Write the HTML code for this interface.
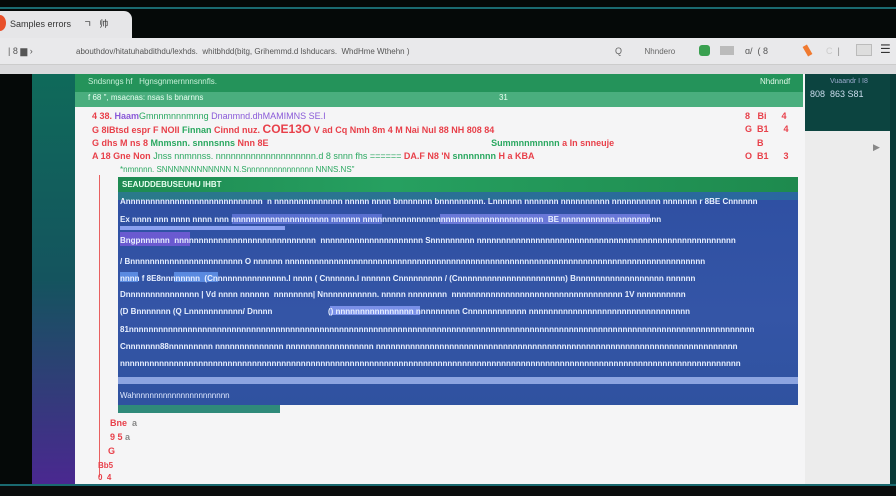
<!DOCTYPE html>
<html><head><meta charset="utf-8"><style>
*{margin:0;padding:0;box-sizing:border-box}
body{width:896px;height:496px;overflow:hidden;background:#050908;font-family:"Liberation Sans",sans-serif;position:relative}
.a{position:absolute}
.t{position:absolute;white-space:nowrap;font-size:9px;line-height:11px}
.r{color:#e8404a;font-weight:bold}
.g{color:#2aa860}
.p{color:#8a5ad8}
.w{color:#e8f0ff;font-size:8px;font-weight:bold}
</style></head><body>
<div class="a" style="left:0;top:7px;width:896px;height:2px;background:#1a6a70"></div>
<div class="a" style="left:0;top:11px;width:132px;height:28px;background:#e6e6e8;border-radius:0 8px 0 0"></div>
<div class="a" style="left:-6px;top:15px;width:12px;height:16px;border-radius:50%;background:#e8502a"></div>
<div class="t" style="left:10px;top:19px;color:#333">Samples errors &nbsp;&nbsp;&nbsp;&nbsp;ㄱ &nbsp;&nbsp;帅</div>
<div class="a" style="left:0;top:38px;width:896px;height:27px;background:#e9e9eb;border-bottom:1px solid #ccc"></div>
<div class="t" style="left:8px;top:46px;color:#555">| 8 ▆ › </div>
<div class="t" style="left:76px;top:46px;color:#555;font-size:8px">abouthdov/hitatuhabdithdu/lexhds.&nbsp; whitbhdd(bitg, Grihemmd.d lshducars.&nbsp; WhdHme Wthehn )</div>
<div class="t" style="left:615px;top:46px;color:#666">Q &nbsp;&nbsp;&nbsp;&nbsp;&nbsp;&nbsp;&nbsp;&nbsp;<span style="font-size:8px">Nhndero</span></div>
<div class="a" style="left:699px;top:45px;width:11px;height:11px;border-radius:3px;background:#3aa050"></div>
<div class="a" style="left:720px;top:46px;width:14px;height:9px;background:#bbb"></div>
<div class="t" style="left:745px;top:46px;color:#555">ɑ/ &nbsp;( 8</div>
<div class="a" style="left:805px;top:45px;width:5px;height:11px;background:#f07a30;transform:rotate(-30deg)"></div>
<div class="t" style="left:826px;top:46px;color:#ccc">C &nbsp;<span style="color:#888">|</span></div>
<div class="a" style="left:856px;top:44px;width:16px;height:12px;border:1px solid #bbb;background:#ddd"></div>
<div class="t" style="left:880px;top:44px;color:#333;font-size:12px">☰</div>
<div class="a" style="left:0;top:65px;width:896px;height:9px;background:#dadadc"></div>
<div class="a" style="left:32px;top:74px;width:44px;height:410px;background:linear-gradient(#0f6a5a,#14545e 50%,#4a2890)"></div>
<div class="a" style="left:75px;top:74px;width:730px;height:410px;background:#f5f5f6"></div>
<div class="a" style="left:75px;top:74px;width:728px;height:19px;background:#24935a"></div>
<div class="a" style="left:75px;top:92px;width:728px;height:15px;background:#4aae7e"></div>
<div class="t" style="left:88px;top:76px;color:#c8f0d8;font-size:8px">Sndsnngs hf &nbsp;&nbsp;Hgnsgnmernnnsnnfls.</div>
<div class="t" style="left:760px;top:76px;color:#e0f8e8;font-size:8px">Nhdnndf</div>
<div class="t" style="left:88px;top:92px;color:#e8fff0;font-size:8px">f 68 ", msacnas: nsas ls bnarnns &nbsp;&nbsp;&nbsp;&nbsp;&nbsp;&nbsp;&nbsp;&nbsp;&nbsp;&nbsp;&nbsp;&nbsp;&nbsp;&nbsp;&nbsp;&nbsp;&nbsp;&nbsp;&nbsp;&nbsp;&nbsp;&nbsp;&nbsp;&nbsp;&nbsp;&nbsp;&nbsp;&nbsp;&nbsp;&nbsp;&nbsp;&nbsp;&nbsp;&nbsp;&nbsp;&nbsp;&nbsp;&nbsp;&nbsp;&nbsp;&nbsp;&nbsp;&nbsp;&nbsp;&nbsp;&nbsp;&nbsp;&nbsp;&nbsp;&nbsp;&nbsp;&nbsp;&nbsp;&nbsp;&nbsp;&nbsp;&nbsp;&nbsp;&nbsp;&nbsp;&nbsp;&nbsp;&nbsp;&nbsp;&nbsp;&nbsp;&nbsp;&nbsp;&nbsp;&nbsp;&nbsp;&nbsp;&nbsp;&nbsp;&nbsp;&nbsp;&nbsp;&nbsp;&nbsp;&nbsp;&nbsp;&nbsp;&nbsp;&nbsp;&nbsp;&nbsp;&nbsp;&nbsp;&nbsp;&nbsp;&nbsp;&nbsp;&nbsp;&nbsp;&nbsp;&nbsp;&nbsp;&nbsp;&nbsp;&nbsp;&nbsp;&nbsp;&nbsp;&nbsp;&nbsp;&nbsp;&nbsp;&nbsp;&nbsp;&nbsp;&nbsp;&nbsp;&nbsp;&nbsp;&nbsp;&nbsp;&nbsp;&nbsp;&nbsp;&nbsp;&nbsp;&nbsp;&nbsp;&nbsp;&nbsp;&nbsp;&nbsp;&nbsp;&nbsp;&nbsp;&nbsp; 31</div>
<div class="a" style="left:805px;top:74px;width:85px;height:57px;background:#0c4440"></div>
<div class="a" style="left:805px;top:131px;width:85px;height:353px;background:#ececec"></div>
<div class="a" style="left:890px;top:74px;width:6px;height:410px;background:#0a3a38"></div>
<div class="t" style="left:830px;top:76px;color:#9ac;font-size:7px">Vuaandr I I8</div>
<div class="t" style="left:810px;top:89px;color:#cde;font-size:9px">808 &nbsp;863 S81</div>
<div class="t" style="left:873px;top:142px;color:#888">▶</div>
<div class="t r" style="left:92px;top:111px">4 38. <span class="p">Haam</span><span class="g" style="font-weight:normal">Gmnnmnnnmnng</span> <span class="p" style="font-weight:normal">Dnanmnd.dhMAMIMNS SE.I</span></div>
<div class="t r" style="left:92px;top:124px">G 8IBtsd espr F NOII <span class="g">Finnan</span> Cinnd nuz. <span style="font-size:12px">COE13O</span> V ad Cq Nmh 8m 4 M Nai NuI 88 NH 808 84</div>
<div class="t r" style="left:92px;top:138px">G dhs M ns 8 <span class="g">Mnmsnn. snnnsnns</span> Nnn 8E &nbsp;&nbsp;&nbsp;&nbsp;&nbsp;&nbsp;&nbsp;&nbsp;&nbsp;&nbsp;&nbsp;&nbsp;&nbsp;&nbsp;&nbsp;&nbsp;&nbsp;&nbsp;&nbsp;&nbsp;&nbsp;&nbsp;&nbsp;&nbsp;&nbsp;&nbsp;&nbsp;&nbsp;&nbsp;&nbsp;&nbsp;&nbsp;&nbsp;&nbsp;&nbsp;&nbsp;&nbsp;&nbsp;&nbsp;&nbsp;&nbsp;&nbsp;&nbsp;&nbsp;&nbsp;&nbsp;&nbsp;&nbsp;&nbsp;&nbsp;&nbsp;&nbsp;&nbsp;&nbsp;&nbsp;&nbsp;&nbsp;&nbsp;&nbsp;&nbsp;&nbsp;&nbsp;&nbsp;&nbsp;&nbsp;&nbsp;&nbsp;&nbsp;&nbsp;&nbsp;&nbsp;&nbsp;&nbsp;&nbsp;&nbsp;&nbsp;&nbsp;&nbsp;&nbsp;&nbsp;&nbsp;&nbsp;&nbsp;&nbsp;&nbsp;&nbsp;&nbsp;&nbsp;<span class="g">Summnnmnnnn</span> a In snneuje</div>
<div class="t r" style="left:92px;top:151px">A 18 Gne Non <span class="g" style="font-weight:normal">Jnss nnmnnss. nnnnnnnnnnnnnnnnnnnn.d 8 snnn fhs ======</span> DA.F N8 'N <span class="g">snnnnnnn</span> H a KBA</div>
<div class="t g" style="left:120px;top:164px;font-size:8px">*nmnnnn. SNNNNNNNNNNNN N.Snnnnnnnnnnnnnnn NNNS.NS"</div>
<div class="t r" style="left:745px;top:111px">8 &nbsp;&nbsp;Bi &nbsp;&nbsp;&nbsp;&nbsp;&nbsp;4</div>
<div class="t r" style="left:745px;top:124px">G &nbsp;B1 &nbsp;&nbsp;&nbsp;&nbsp;&nbsp;4</div>
<div class="t r" style="left:757px;top:138px">B</div>
<div class="t r" style="left:745px;top:151px">O &nbsp;B1 &nbsp;&nbsp;&nbsp;&nbsp;&nbsp;3</div>
<div class="a" style="left:99px;top:175px;width:1px;height:302px;background:#e86060"></div>
<div class="a" style="left:118px;top:177px;width:680px;height:228px;background:linear-gradient(#2e4fa2,#3455a6 60%,#2f52a0)"></div>
<div class="a" style="left:118px;top:177px;width:680px;height:18px;background:linear-gradient(90deg,#1e8a52,#26a060 40%,#1e8a4e)"></div>
<div class="a" style="left:118px;top:192px;width:680px;height:8px;background:linear-gradient(90deg,#2a7a8a,#2a66a0)"></div>
<div class="t" style="left:122px;top:179px;color:#e8fff0;font-size:8px;font-weight:bold">SEAUDDEBUSEUHU IHBT</div>
<div class="t w" style="left:120px;top:196px">Annnnnnnnnnnnnnnnnnnnnnnnnnnn &nbsp;n nnnnnnnnnnnnnn nnnnn nnnn bnnnnnnn bnnnnnnnnn. Lnnnnnn nnnnnnn nnnnnnnnnn nnnnnnnnnn nnnnnnn r 8BE Cnnnnnn</div>
<div class="a" style="left:232px;top:214px;width:150px;height:10px;background:#5a70d0"></div>
<div class="a" style="left:440px;top:214px;width:210px;height:10px;background:#6a78d8"></div>
<div class="t w" style="left:120px;top:214px">Ex nnnn nnn nnnn nnnn nnn nnnnnnnnnnnnnnnnnnnn nnnnnn nnnnnnnnnnnnnnnnnnnnnnnnnnnnnnnnnnnnn &nbsp;BE nnnnnnnnnnn.nnnnnnnnn</div>
<div class="a" style="left:120px;top:226px;width:165px;height:4px;background:#8aa0f0"></div>
<div class="a" style="left:120px;top:232px;width:70px;height:14px;background:#6a5ad0"></div>
<div class="t w" style="left:120px;top:235px">Bngpnnnnnn &nbsp;nnnnnnnnnnnnnnnnnnnnnnnnnnnnn &nbsp;nnnnnnnnnnnnnnnnnnnnn Snnnnnnnnn nnnnnnnnnnnnnnnnnnnnnnnnnnnnnnnnnnnnnnnnnnnnnnnnnnnnn</div>
<div class="t w" style="left:120px;top:256px">/ Bnnnnnnnnnnnnnnnnnnnnnnn O nnnnnn nnnnnnnnnnnnnnnnnnnnnnnnnnnnnnnnnnnnnnnnnnnnnnnnnnnnnnnnnnnnnnnnnnnnnnnnnnnnnnnnnnnnnn</div>
<div class="a" style="left:120px;top:272px;width:18px;height:10px;background:#5a8ae0"></div>
<div class="a" style="left:174px;top:272px;width:44px;height:10px;background:#5a8ae0"></div>
<div class="t w" style="left:120px;top:273px">nnnn f 8E8nnnnnnnn &nbsp;(Cnnnnnnnnnnnnnnn.l nnnn ( Cnnnnnn.l nnnnnn Cnnnnnnnnn / (Cnnnnnnnnnnnnnnnnnnnnnn) Bnnnnnnnnnnnnnnnnnn nnnnnn</div>
<div class="t w" style="left:120px;top:289px">Dnnnnnnnnnnnnnnn | Vd nnnn nnnnnn &nbsp;nnnnnnnn| Nnnnnnnnnnnn. nnnnn nnnnnnnn &nbsp;nnnnnnnnnnnnnnnnnnnnnnnnnnnnnnnnnnn 1V nnnnnnnnnn</div>
<div class="a" style="left:330px;top:306px;width:90px;height:9px;background:#7a90e8"></div>
<div class="t w" style="left:120px;top:306px">(D Bnnnnnnn (Q Lnnnnnnnnnnn/ Dnnnn &nbsp;&nbsp;&nbsp;&nbsp;&nbsp;&nbsp;&nbsp;&nbsp;&nbsp;&nbsp;&nbsp;&nbsp;&nbsp;&nbsp;&nbsp;&nbsp;&nbsp;&nbsp;&nbsp;&nbsp;&nbsp;&nbsp;&nbsp; () nnnnnnnnnnnnnnnn nnnnnnnnn Cnnnnnnnnnnnn nnnnnnnnnnnnnnnnnnnnnnnnnnnnnnnnn</div>
<div class="t w" style="left:120px;top:324px">81nnnnnnnnnnnnnnnnnnnnnnnnnnnnnnnnnnnnnnnnnnnnnnnnnnnnnnnnnnnnnnnnnnnnnnnnnnnnnnnnnnnnnnnnnnnnnnnnnnnnnnnnnnnnnnnnnnnnnnnnnnnnnnnn</div>
<div class="t w" style="left:120px;top:341px">Cnnnnnnn88nnnnnnnnn nnnnnnnnnnnnnn nnnnnnnnnnnnnnnnnn nnnnnnnnnnnnnnnnnnnnnnnnnnnnnnnnnnnnnnnnnnnnnnnnnnnnnnnnnnnnnnnnnnnnnnnnnn</div>
<div class="t w" style="left:120px;top:358px">nnnnnnnnnnnnnnnnnnnnnnnnnnnnnnnnnnnnnnnnnnnnnnnnnnnnnnnnnnnnnnnnnnnnnnnnnnnnnnnnnnnnnnnnnnnnnnnnnnnnnnnnnnnnnnnnnnnnnnnnnnnnnnn</div>
<div class="a" style="left:118px;top:377px;width:680px;height:7px;background:#8ca4e0"></div>
<div class="t" style="left:120px;top:390px;color:#e0e8ff;font-size:8px">Wahnnnnnnnnnnnnnnnnnnnnn</div>
<div class="a" style="left:118px;top:405px;width:162px;height:8px;background:#2f8a7a"></div>
<div class="t r" style="left:110px;top:418px">Bne &nbsp;<span style="color:#888">a</span></div>
<div class="t r" style="left:110px;top:432px">9 5 <span style="color:#888">a</span></div>
<div class="t r" style="left:108px;top:446px">G</div>
<div class="t r" style="left:98px;top:460px;font-size:8px">Bb5</div>
<div class="t r" style="left:98px;top:472px;font-size:8px">0 &nbsp;4</div>
<div class="a" style="left:0;top:484px;width:896px;height:2px;background:#1a6a70"></div>
<div class="a" style="left:0;top:486px;width:896px;height:10px;background:#0a0c0c"></div>
</body></html>
